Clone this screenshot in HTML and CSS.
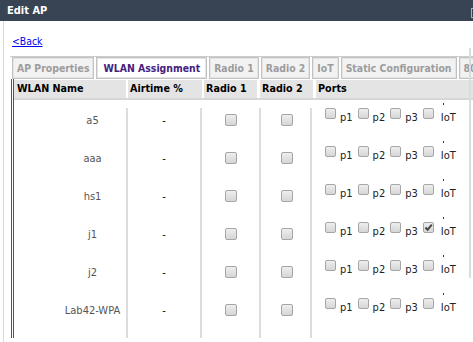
FILE: index.html
```html
<!DOCTYPE html>
<html>
<head>
<meta charset="utf-8">
<link rel="stylesheet" href="styles.css">
</head>
<body>
<div class="titlebar">Edit AP<span class="tb-btn"></span></div>
<div class="page">
  <a class="back" href="#">&lt;Back</a>
  <div class="tabs">
    <span class="tab">AP Properties</span>
    <span class="tab active">WLAN Assignment</span>
    <span class="tab">Radio 1</span>
    <span class="tab">Radio 2</span>
    <span class="tab">IoT</span>
    <span class="tab">Static Configuration</span>
    <span class="tab">802.11</span>
  </div>
  <div class="panel">
    <div class="thead">
      <div class="th c-name">WLAN Name</div>
      <div class="th c-air">Airtime %</div>
      <div class="th c-r1">Radio 1</div>
      <div class="th c-r2">Radio 2</div>
      <div class="th c-ports">Ports</div>
    </div>
    <div class="tbody">
      <div class="row">
        <div class="name">a5</div><div class="air">-</div>
        <div class="radio"><span class="cb"></span></div><div class="radio r2"><span class="cb"></span></div>
        <div class="ports"><span class="cb sm"></span><span class="lbl">p1</span><span class="cb sm"></span><span class="lbl">p2</span><span class="cb sm"></span><span class="lbl">p3</span><span class="cb sm"></span><span class="lbl iot">IoT</span></div>
      </div>
      <div class="row">
        <div class="name">aaa</div><div class="air">-</div>
        <div class="radio"><span class="cb"></span></div><div class="radio r2"><span class="cb"></span></div>
        <div class="ports"><span class="cb sm"></span><span class="lbl">p1</span><span class="cb sm"></span><span class="lbl">p2</span><span class="cb sm"></span><span class="lbl">p3</span><span class="cb sm"></span><span class="lbl iot">IoT</span></div>
      </div>
      <div class="row">
        <div class="name">hs1</div><div class="air">-</div>
        <div class="radio"><span class="cb"></span></div><div class="radio r2"><span class="cb"></span></div>
        <div class="ports"><span class="cb sm"></span><span class="lbl">p1</span><span class="cb sm"></span><span class="lbl">p2</span><span class="cb sm"></span><span class="lbl">p3</span><span class="cb sm"></span><span class="lbl iot">IoT</span></div>
      </div>
      <div class="row">
        <div class="name">j1</div><div class="air">-</div>
        <div class="radio"><span class="cb"></span></div><div class="radio r2"><span class="cb"></span></div>
        <div class="ports"><span class="cb sm"></span><span class="lbl">p1</span><span class="cb sm"></span><span class="lbl">p2</span><span class="cb sm"></span><span class="lbl">p3</span><span class="cb sm checked"><svg viewBox="0 0 11 11" width="11" height="11"><path d="M2.5 5.5 L4.6 7.8 L8.8 2.6" fill="none" stroke="#454545" stroke-width="2"/></svg></span><span class="lbl iot">IoT</span></div>
      </div>
      <div class="row">
        <div class="name">j2</div><div class="air">-</div>
        <div class="radio"><span class="cb"></span></div><div class="radio r2"><span class="cb"></span></div>
        <div class="ports"><span class="cb sm"></span><span class="lbl">p1</span><span class="cb sm"></span><span class="lbl">p2</span><span class="cb sm"></span><span class="lbl">p3</span><span class="cb sm"></span><span class="lbl iot">IoT</span></div>
      </div>
      <div class="row">
        <div class="name">Lab42-WPA</div><div class="air">-</div>
        <div class="radio"><span class="cb"></span></div><div class="radio r2"><span class="cb"></span></div>
        <div class="ports"><span class="cb sm"></span><span class="lbl">p1</span><span class="cb sm"></span><span class="lbl">p2</span><span class="cb sm"></span><span class="lbl">p3</span><span class="cb sm"></span><span class="lbl iot">IoT</span></div>
      </div>
    </div>
  </div>
  <span class="edge"></span>
</div>
</body>
</html>
```
FILE: styles.css
```css
html, body {
  margin: 0;
  padding: 0;
  overflow: hidden;
  background: #fff;
}
body {
  width: 473px;
  height: 342px;
  font-family: "DejaVu Sans Condensed", "DejaVu Sans", "Liberation Sans", sans-serif;
  font-stretch: condensed;
  font-size: 11px;
  color: #000;
  position: relative;
}
.titlebar {
  height: 21px;
  line-height: 21px;
  background: #384353;
  color: #fff;
  font-weight: bold;
  font-size: 11px;
  padding-left: 7px;
  position: relative;
}
.tb-btn {
  position: absolute;
  left: 471px;
  top: 8px;
  width: 10px;
  height: 8px;
  border: 1px solid #a8b0bc;
}
.page {
  margin-left: 3px;
  border-left: 1px solid #d0daea;
  padding-top: 13px;
  height: 308px;
}
.back {
  display: block;
  margin-left: 8px;
  width: max-content;
  line-height: 14px;
  font-size: 10.4px;
  color: #0000ee;
  text-decoration: underline;
}
.tabs {
  margin-top: 8px;
  margin-left: 6px;
  padding-left: 2px;
  border-top: 1px solid #cccccc;
  display: flex;
  gap: 2px;
  white-space: nowrap;
  overflow: hidden;
}
.tab {
  flex: none;
  height: 20px;
  line-height: 20px;
  padding: 0 4px;
  border: 1px solid #c2c2c2;
  box-shadow: inset 0 0 0 1px #e4e4e4;
  background: #f2f2f2;
  color: #9c9c9c;
  font-weight: bold;
  font-size: 10.4px;
}
.tab.active {
  padding: 0 6px;
  background: #fff;
  color: #45207f;
}
.panel {
  margin-left: 7px;
  border-left: 3px double #555;
  padding-top: 1px;
}
.thead {
  display: flex;
  height: 18px;
  border-bottom: 2px solid #d6d6d6;
}
.th {
  background: #e4e4e4;
  font-weight: bold;
  font-size: 10.7px;
  line-height: 18px;
  padding-left: 3px;
  box-sizing: border-box;
}
.c-name { width: 112px; }
.c-air { width: 74px; margin-left: 2px; padding-left: 2px; }
.c-r1 { width: 53px; margin-left: 2px; padding-left: 2px; }
.c-r2 { width: 53px; margin-left: 3px; padding-left: 2px; }
.c-ports { flex: 1; margin-left: 3px; padding-left: 2px; }
.tbody {
  padding-top: 1px;
  padding-bottom: 9px;
  background-image:
    linear-gradient(#dcdcdc, #dcdcdc),
    linear-gradient(#dcdcdc, #dcdcdc),
    linear-gradient(#dcdcdc, #dcdcdc),
    linear-gradient(#dcdcdc, #dcdcdc);
  background-repeat: no-repeat;
  background-size: 2px calc(100% - 8px);
  background-position: 112px 8px, 186px 8px, 245px 8px, 296px 8px;
}
.row {
  display: grid;
  grid-template-columns: 112px 72px 57px 49px 1fr;
  column-gap: 2px;
  height: 38px;
  align-items: center;
}
.name {
  padding-left: 45px;
  text-align: center;
  color: #555;
}
.air {
  text-align: center;
}
.radio {
  display: flex;
  justify-content: center;
}
.radio.r2 {
  padding-left: 3px;
}
.ports {
  align-self: start;
  padding-top: 7px;
  padding-left: 13px;
  display: flex;
  align-items: flex-start;
  color: #222;
}
.cb {
  display: block;
  flex: none;
  width: 10px;
  height: 10px;
  border: 1px solid #a6a6a6;
  border-radius: 2px;
  background: linear-gradient(#eeeeee, #d6d6d6);
}
.cb.sm {
  width: 9px;
  height: 9px;
}
.cb svg {
  display: block;
  margin: -1px;
}
.lbl {
  margin-top: 3px;
  line-height: 13px;
  margin-left: 4px;
  margin-right: 5px;
}
.lbl.iot {
  margin-left: 7px;
  position: relative;
}
.lbl.iot::before {
  content: "";
  position: absolute;
  left: 2px;
  top: -8px;
  width: 1px;
  height: 2px;
  background: #6a2020;
}
.edge {
  position: absolute;
  left: 469px;
  top: 48px;
  width: 2px;
  height: 230px;
  background: #dcdcdc;
}
```
